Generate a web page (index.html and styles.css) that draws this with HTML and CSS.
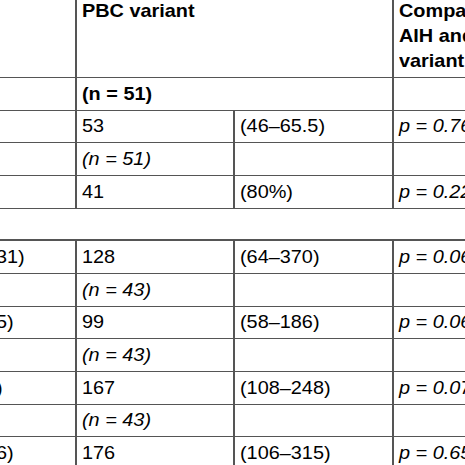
FILE: index.html
```html
<!DOCTYPE html>
<html>
<head>
<meta charset="utf-8">
<link rel="stylesheet" href="styles.css">
</head>
<body>
<div class="sheet">
  <div class="cell head span2"><span class="t b">AIH</span></div>
  <div class="cell head span2"><span class="t b">PBC variant</span></div>
  <div class="cell head"><span class="t b wrap">Comparison of AIH and PBC variant</span></div>

  <div class="cell span2"><span class="t b">(n = 31)</span></div>
  <div class="cell span2"><span class="t b">(n = 51)</span></div>
  <div class="cell"></div>

  <div class="cell"><span class="t">48</span></div>
  <div class="cell"><span class="t">(21–77)</span></div>
  <div class="cell"><span class="t">53</span></div>
  <div class="cell"><span class="t">(46–65.5)</span></div>
  <div class="cell"><span class="t i">p = 0.764</span></div>

  <div class="cell"><span class="t i">(n = 31)</span></div>
  <div class="cell"></div>
  <div class="cell"><span class="t i">(n = 51)</span></div>
  <div class="cell"></div>
  <div class="cell"></div>

  <div class="cell"><span class="t">25</span></div>
  <div class="cell"><span class="t">(81%)</span></div>
  <div class="cell"><span class="t">41</span></div>
  <div class="cell"><span class="t">(80%)</span></div>
  <div class="cell"><span class="t i">p = 0.226</span></div>

  <div class="cell section span5"><span class="t b">Liver biochemistry</span></div>

  <div class="cell"><span class="t">188</span></div>
  <div class="cell"><span class="t">(105–1231)</span></div>
  <div class="cell"><span class="t">128</span></div>
  <div class="cell"><span class="t">(64–370)</span></div>
  <div class="cell"><span class="t i">p = 0.062</span></div>

  <div class="cell"><span class="t i">(n = 31)</span></div>
  <div class="cell"></div>
  <div class="cell"><span class="t i">(n = 43)</span></div>
  <div class="cell"></div>
  <div class="cell"></div>

  <div class="cell"><span class="t">150</span></div>
  <div class="cell"><span class="t">(50–1005)</span></div>
  <div class="cell"><span class="t">99</span></div>
  <div class="cell"><span class="t">(58–186)</span></div>
  <div class="cell"><span class="t i">p = 0.068</span></div>

  <div class="cell"><span class="t i">(n = 31)</span></div>
  <div class="cell"></div>
  <div class="cell"><span class="t i">(n = 43)</span></div>
  <div class="cell"></div>
  <div class="cell"></div>

  <div class="cell"><span class="t">214</span></div>
  <div class="cell"><span class="t">(27–390)</span></div>
  <div class="cell"><span class="t">167</span></div>
  <div class="cell"><span class="t">(108–248)</span></div>
  <div class="cell"><span class="t i">p = 0.073</span></div>

  <div class="cell"><span class="t i">(n = 31)</span></div>
  <div class="cell"></div>
  <div class="cell"><span class="t i">(n = 43)</span></div>
  <div class="cell"></div>
  <div class="cell"></div>

  <div class="cell"><span class="t">196</span></div>
  <div class="cell"><span class="t">(126–526)</span></div>
  <div class="cell"><span class="t">176</span></div>
  <div class="cell"><span class="t">(106–315)</span></div>
  <div class="cell"><span class="t i">p = 0.659</span></div>
</div>
</body>
</html>
```
FILE: styles.css
```css
html, body {
  margin: 0;
  padding: 0;
  background: #ffffff;
  overflow: hidden;
}

.sheet {
  display: grid;
  grid-template-columns: 100px 159px 158px 159px 200px;
  grid-template-rows: 80px repeat(12, 32.67px);
  margin-left: -184px;
  margin-top: -2px;
  width: 776px;
  font-family: "Liberation Sans", Arial, sans-serif;
  font-size: 18.4px;
  color: #000;
}

.cell {
  box-sizing: border-box;
  display: flex;
  align-items: center;
  padding: 0 5px;
  border-left: 2px solid #555;
  border-bottom: 1px solid #555;
  white-space: nowrap;
  min-width: 0;
}

.head {
  align-items: flex-start;
  line-height: 25px;
  white-space: normal;
}

.span2 { grid-column: span 2; }
.span5 { grid-column: span 5; }

.section {
  border-bottom-width: 2px;
}

.t {
  display: inline-block;
  transform: scaleX(1.08);
  transform-origin: left center;
}

.wrap {
  width: 140px;
  transform-origin: left top;
}

.b { font-weight: bold; }
.i { font-style: italic; }
```
